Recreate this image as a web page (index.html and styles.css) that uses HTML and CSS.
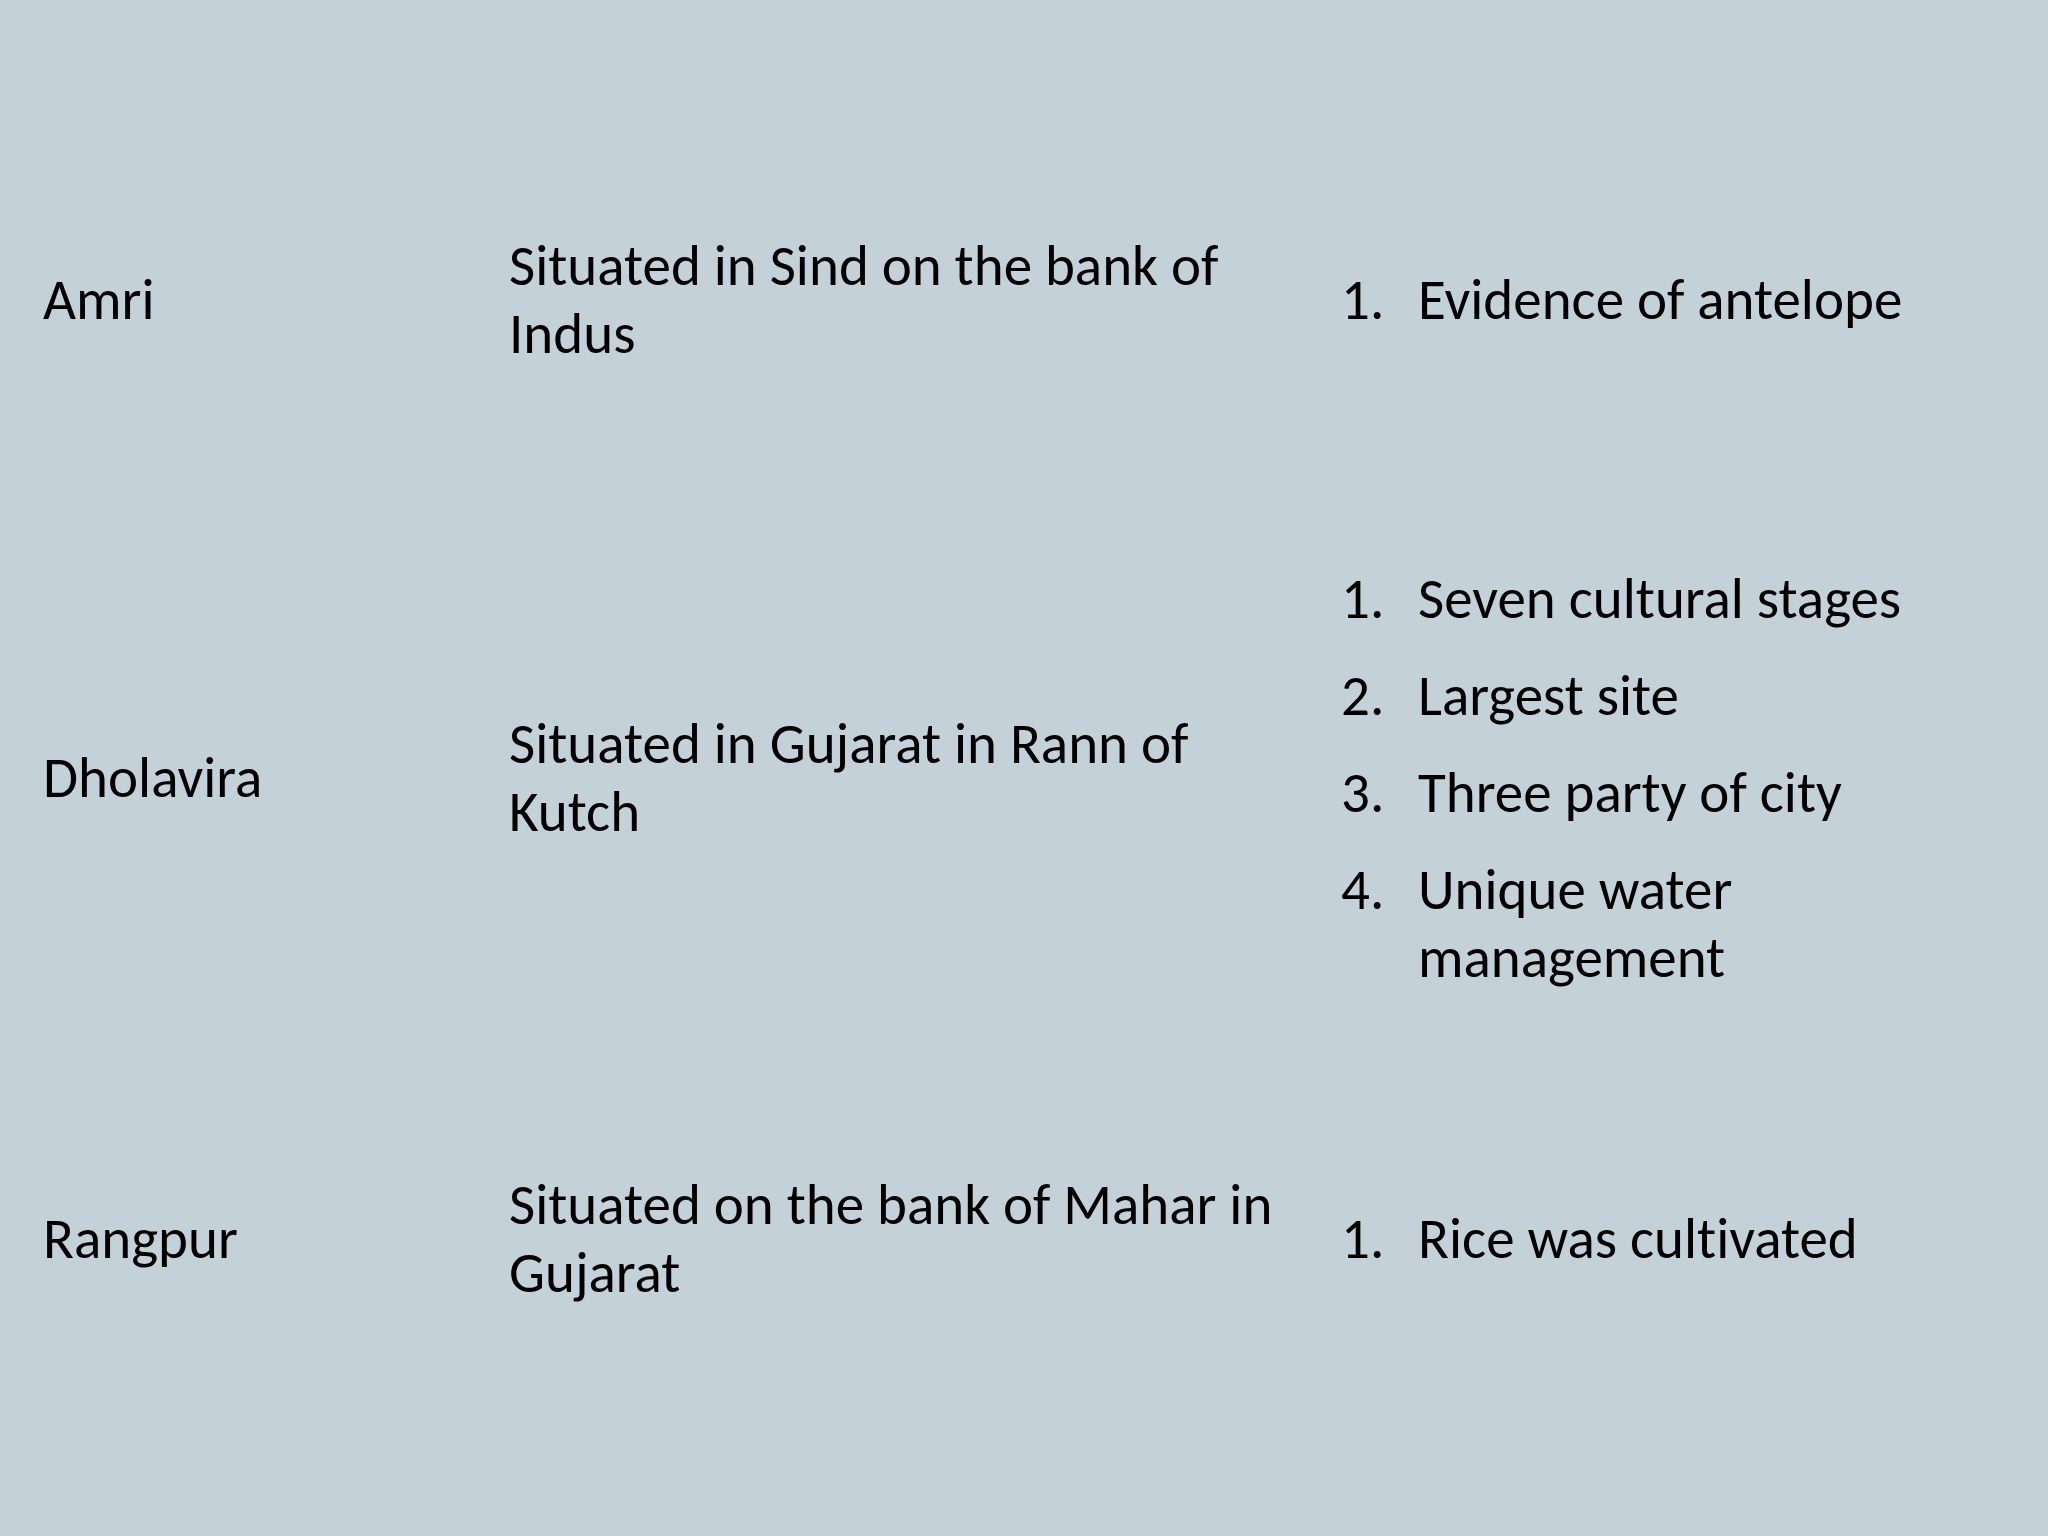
FILE: index.html
```html
<!DOCTYPE html>
<html>
<head>
<meta charset="utf-8">
<link rel="stylesheet" href="styles.css">
</head>
<body>
<div class="slide">
  <div class="row row1">
    <div class="site">Amri</div>
    <div class="loc">Situated in Sind on the bank of<br>Indus</div>
    <ol class="facts">
      <li><span class="num">1.</span><span class="txt">Evidence of antelope</span></li>
    </ol>
  </div>
  <div class="row row2">
    <div class="site">Dholavira</div>
    <div class="loc">Situated in Gujarat in Rann of<br>Kutch</div>
    <ol class="facts">
      <li><span class="num">1.</span><span class="txt">Seven cultural stages</span></li>
      <li><span class="num">2.</span><span class="txt">Largest site</span></li>
      <li><span class="num">3.</span><span class="txt">Three party of city</span></li>
      <li><span class="num">4.</span><span class="txt">Unique water<br>management</span></li>
    </ol>
  </div>
  <div class="row row3">
    <div class="site">Rangpur</div>
    <div class="loc">Situated on the bank of Mahar in<br>Gujarat</div>
    <ol class="facts">
      <li><span class="num">1.</span><span class="txt">Rice was cultivated</span></li>
    </ol>
  </div>
</div>
</body>
</html>
```
FILE: styles.css
```css
html, body {
  margin: 0;
  padding: 0;
}
body {
  width: 2048px;
  height: 1536px;
  background: #c5d1d8;
  overflow: hidden;
}
.slide {
  width: 2048px;
  height: 1536px;
  padding-top: 60px;
  box-sizing: border-box;
  font-family: Carlito, Lato, "Open Sans", sans-serif;
  font-size: 57px;
  line-height: 68px;
  font-variant-ligatures: none;
  font-feature-settings: "liga" 0, "clig" 0;
  color: #000;
}
.row {
  display: grid;
  grid-template-columns: 466px 832px 1fr;
  align-items: center;
  padding-left: 43px;
}
.row1 { height: 480px; }
.row2 { height: 476px; }
.row3 { height: 446px; }
.facts {
  list-style: none;
  margin: 0;
  padding: 0;
  display: flex;
  flex-direction: column;
  gap: 29px;
}
.facts li {
  display: flex;
}
.num {
  width: 77px;
  flex: none;
}
```
